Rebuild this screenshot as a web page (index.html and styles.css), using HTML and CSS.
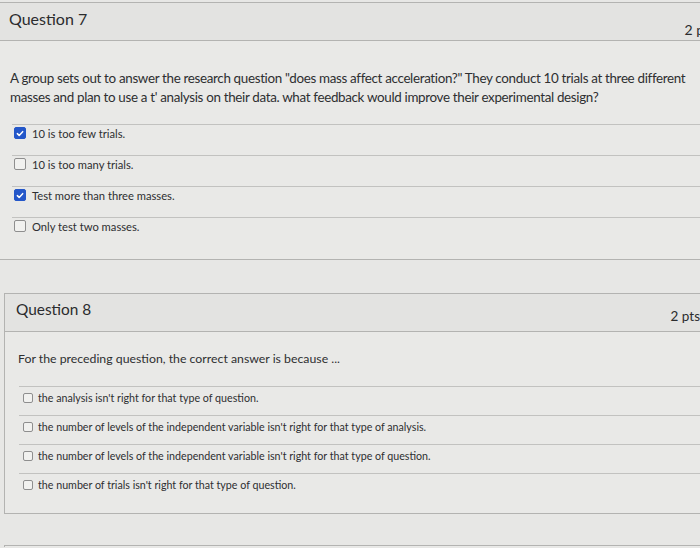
FILE: index.html
```html
<!DOCTYPE html>
<html>
<head>
<meta charset="utf-8">
<link rel="stylesheet" href="styles.css">
</head>
<body>
<div class="page">
  <section class="card card-q7">
    <header class="card-head">
      <h2 class="q-title">Question 7</h2>
      <span class="pts">2 pts</span>
    </header>
    <div class="card-body">
      <p class="q-text">A group sets out to answer the research question "does mass affect acceleration?" They conduct 10 trials at three different masses and plan to use a t' analysis on their data. what feedback would improve their experimental design?</p>
      <ul class="answers">
        <li class="answer"><span class="box checked"><svg viewBox="0 0 12 12" width="12" height="12"><path d="M2.8 6.2 L5 8.3 L9.2 3.8" fill="none" stroke="#fff" stroke-width="1.8" stroke-linecap="round" stroke-linejoin="round"/></svg></span>10 is too few trials.</li>
        <li class="answer"><span class="box"></span>10 is too many trials.</li>
        <li class="answer"><span class="box checked"><svg viewBox="0 0 12 12" width="12" height="12"><path d="M2.8 6.2 L5 8.3 L9.2 3.8" fill="none" stroke="#fff" stroke-width="1.8" stroke-linecap="round" stroke-linejoin="round"/></svg></span>Test more than three masses.</li>
        <li class="answer"><span class="box"></span>Only test two masses.</li>
      </ul>
    </div>
  </section>

  <section class="card card-q8">
    <header class="card-head">
      <h2 class="q-title">Question 8</h2>
      <span class="pts">2 pts</span>
    </header>
    <div class="card-body">
      <p class="q-text">For the preceding question, the correct answer is because ...</p>
      <ul class="answers">
        <li class="answer"><span class="box"></span>the analysis isn't right for that type of question.</li>
        <li class="answer"><span class="box"></span>the number of levels of the independent variable isn't right for that type of analysis.</li>
        <li class="answer"><span class="box"></span>the number of levels of the independent variable isn't right for that type of question.</li>
        <li class="answer"><span class="box"></span>the number of trials isn't right for that type of question.</li>
      </ul>
    </div>
  </section>

  <section class="card card-next"></section>
</div>
</body>
</html>
```

FILE: styles.css
```css
html, body {
  margin: 0;
  padding: 0;
}
body {
  width: 700px;
  height: 548px;
  overflow: hidden;
  background: #e7e7e5;
  font-family: Lato, "Open Sans", sans-serif;
  color: #2e2f31;
}
.page {
  display: flex;
  flex-direction: column;
  padding-top: 2px;
}
.card {
  border: 1px solid #b3b3b1;
  background: #e9e9e7;
}
.card-head {
  display: flex;
  justify-content: space-between;
  background: #e3e3e1;
  border-bottom: 1px solid #b3b3b1;
}
.q-title {
  margin: 0;
  font-weight: 400;
  font-size: 16px;
  color: #2b2c2e;
}
.pts {
  font-size: 14px;
  color: #2b2c2e;
}
.q-text {
  margin: 0;
}
.answers {
  list-style: none;
  margin: 0;
  padding: 0;
}
.answer {
  display: flex;
  align-items: center;
  border-top: 1px solid #c2c2c0;
}
.box {
  flex: none;
  display: flex;
  align-items: center;
  justify-content: center;
  box-sizing: border-box;
  border: 1px solid #8e8e8e;
  border-radius: 2px;
  background: #f1f1ef;
}
.box.checked {
  background: #2457c9;
  border-color: #2457c9;
}

/* Question 7 */
.card-q7 {
  margin-left: -2px;
  width: 740px;
  border-left: none;
  height: 258px;
  box-sizing: border-box;
}
.card-q7 .card-head {
  height: 38px;
  box-sizing: border-box;
  padding: 6px 0 0 11px;
}
.card-q7 .pts {
  align-self: flex-end;
  padding-bottom: 2px;
  margin-right: 22px;
}
.card-q7 .card-body {
  padding: 28px 0 0 12px;
}
.card-q7 .q-text {
  font-size: 13.4px;
  line-height: 19px;
  width: 700px;
  letter-spacing: -0.33px;
}
.card-q7 .answers {
  margin-top: 17px;
  margin-left: 2px;
}
.card-q7 .answer {
  height: 31px;
  align-items: flex-start;
  padding-top: 1px;
  box-sizing: border-box;
  font-size: 11.2px;
  line-height: 15px;
}
.card-q7 .box {
  width: 12px;
  height: 12px;
  margin: 1px 6px 0 2px;
}
.card-q7 .box svg {
  width: 11px;
  height: 11px;
}

/* Question 8 */
.card-q8 {
  margin-top: 33px;
  margin-left: 4px;
  width: 740px;
  height: 221px;
  box-sizing: border-box;
  border-right: none;
}
.card-q8 .card-head {
  height: 38px;
  box-sizing: border-box;
  padding: 6px 0 0 11px;
  align-items: flex-start;
}
.card-q8 .q-title {
  font-size: 15.4px;
}
.card-q8 .pts {
  margin-top: 8px;
  margin-right: 44px;
  font-size: 13.5px;
}
.card-q8 .card-body {
  padding: 19px 0 0 13px;
}
.card-q8 .q-text {
  font-size: 12.3px;
  line-height: 16px;
}
.card-q8 .answers {
  margin-top: 19px;
  margin-left: 1px;
}
.card-q8 .answer {
  height: 29px;
  align-items: flex-start;
  padding-top: 4px;
  box-sizing: border-box;
  font-size: 10.7px;
  line-height: 14px;
}
.card-q8 .box {
  width: 10px;
  height: 10px;
  margin: 2px 5px 0 4px;
}
.card-next {
  margin-top: 31px;
  margin-left: 4px;
  width: 740px;
  height: 1px;
  border-right: none;
  border-bottom: none;
}
```
